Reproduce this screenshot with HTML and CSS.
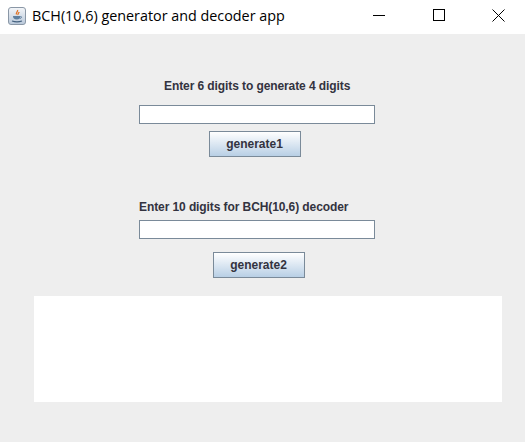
FILE: index.html
```html
<!DOCTYPE html>
<html lang="en">
<head>
<meta charset="utf-8">
<title>BCH(10,6) generator and decoder app</title>
<link rel="stylesheet" href="styles.css">
</head>
<body>
<div class="window">
  <header class="titlebar">
    <svg class="app-icon" width="18" height="18" viewBox="0 0 18 18">
      <defs><linearGradient id="ig" x1="0" y1="0" x2="0" y2="1"><stop offset="0" stop-color="#f4f6f9"/><stop offset="1" stop-color="#b9c8da"/></linearGradient></defs>
      <rect x="0.5" y="0.5" width="17" height="17" rx="2.5" fill="url(#ig)" stroke="#8a97a6"/>
      <path d="M9.5 3c1 1.5-2 2.5-1 4.5M11 5c0 1-1.500 1.500-1 3" fill="none" stroke="#e2762a" stroke-width="1.300"/>
      <path d="M5 9h7.500c0 2-1 3.500-3.700 3.500S5 11 5 9z" fill="#5f7f9f"/>
      <path d="M12.500 9.500c1.500-.3 1.500 1.800-.6 2" fill="none" stroke="#5f7f9f"/>
      <path d="M4 14c3 1 7 1 10 0" fill="none" stroke="#44617f" stroke-width="1.100"/>
    </svg>
    <span class="title">BCH(10,6) generator and decoder app</span>
    <div class="controls">
      <svg class="ctl" width="12" height="12" viewBox="0 0 12 12"><path d="M0 6.500h12" stroke="#000" fill="none"/></svg>
      <svg class="ctl" width="12" height="12" viewBox="0 0 12 12"><rect x="0.500" y="0.500" width="11" height="11" stroke="#000" fill="none"/></svg>
      <svg class="ctl" width="13" height="13" viewBox="0 0 13 13"><path d="M0.500 0.500l12 12M12.500 0.500l-12 12" stroke="#000" fill="none"/></svg>
    </div>
  </header>
  <main class="content">
    <section class="form">
      <label class="label label-center" for="a">Enter 6 digits to generate 4 digits</label>
      <input class="field field-first" id="a" type="text">
      <button class="btn btn-first" type="button">generate1</button>
      <label class="label label-second" for="b">Enter 10 digits for BCH(10,6) decoder</label>
      <input class="field field-second" id="b" type="text">
      <button class="btn btn-second" type="button">generate2</button>
    </section>
    <textarea class="output"></textarea>
  </main>
</div>
</body>
</html>
```
FILE: styles.css
```css
* { box-sizing: border-box; }
html, body { margin: 0; padding: 0; }
body { width: 525px; height: 442px; overflow: hidden; background: #eeeeee; }
.window { display: flex; flex-direction: column; height: 442px; }
.titlebar {
  height: 34px; flex: none; background: #fff;
  display: flex; align-items: center; padding-left: 8px;
}
.app-icon { flex: none; margin-top: -2px; }
.title {
  margin-left: 6px; margin-top: -3px;
  font: 14.35px/20px "Open Sans", "Noto Sans", sans-serif;
  color: #000; white-space: nowrap;
}
.controls { margin-left: auto; display: flex; align-items: center; margin-top: -4px; }
.ctl { display: block; flex: none; }
.ctl:nth-child(1) { margin-right: 48px; }
.ctl:nth-child(2) { margin-right: 47px; }
.ctl:nth-child(3) { margin-right: 20px; }
.content { flex: 1; display: flex; flex-direction: column; }
.form { display: flex; flex-direction: column; align-items: flex-start; padding-left: 139px; }
.label {
  font: bold 12px/14px "Liberation Sans", Arial, sans-serif;
  color: #333340; white-space: nowrap; letter-spacing: -0.09px;
}
.label-center { margin-top: 45px; margin-left: 25px; }
.label-second { margin-top: 43px; }
.field {
  display: block; width: 236px; height: 19px; padding: 0 3px;
  background: #fff; border: 1px solid #7a8a99; border-radius: 0; outline: none;
}
.field-first { margin-top: 12px; }
.field-second { margin-top: 6px; }
.btn {
  display: block; width: 92px; height: 26px; padding: 0 1px 0 0;
  font: bold 12px/14px "Liberation Sans", Arial, sans-serif; color: #333340;
  border: 1px solid #7a8a99; border-radius: 0;
  background: linear-gradient(to bottom, #ffffff 0%, #e6eef6 35%, #b8cfe5 100%);
}
.btn-first { margin-top: 7px; margin-left: 70px; }
.btn-second { margin-top: 13px; margin-left: 74px; }
.output {
  display: block; width: 468px; height: 106px; margin: 18px 0 0 34px;
  background: #fff; border: 0; padding: 0; resize: none; outline: none;
}
```
